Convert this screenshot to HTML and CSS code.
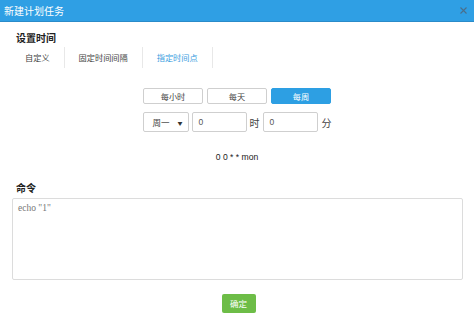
FILE: index.html
```html
<!DOCTYPE html>
<html>
<head>
<meta charset="utf-8">
<link rel="stylesheet" href="styles.css">
</head>
<body>
<div class="dialog">
  <div class="header">
    <span class="title">新建计划任务</span>
    <svg class="close" width="7" height="7" viewBox="0 0 7 7"><path d="M0.5 0.5 L6.5 6.5 M6.5 0.5 L0.5 6.5" stroke="#4a6f8c" stroke-width="1.1"/></svg>
  </div>
  <div class="section-title">设置时间</div>
  <div class="tabs">
    <div class="tab">自定义</div>
    <div class="tab">固定时间间隔</div>
    <div class="tab active">指定时间点</div>
  </div>
  <div class="panel">
    <div class="btn-row">
      <div class="opt">每小时</div>
      <div class="opt">每天</div>
      <div class="opt selected">每周</div>
    </div>
    <div class="input-row">
      <div class="select"><span>周一</span><span class="arrow">▼</span></div>
      <div class="input first">0</div>
      <span class="unit">时</span>
      <div class="input">0</div>
      <span class="unit last">分</span>
    </div>
    <div class="cron">0 0 * * mon</div>
  </div>
  <div class="section-title cmd-title">命令</div>
  <div class="textarea">echo "1"</div>
  <div class="footer"><div class="ok">确定</div></div>
</div>
</body>
</html>
```
FILE: styles.css
```css
* { box-sizing: border-box; }
html, body { margin: 0; padding: 0; background: #fff; }
body {
  width: 474px;
  height: 322px;
  overflow: hidden;
  font-family: "Noto Sans CJK SC", "Liberation Sans", sans-serif;
  color: #333;
}
.dialog { display: flex; flex-direction: column; }
.header {
  height: 22px;
  background: #2f9fe4;
  border-bottom: 1px solid #2a8bc9;
  display: flex;
  align-items: center;
  justify-content: space-between;
  padding: 0 7px 0 4px;
}
.title { color: #fff; font-size: 10px; line-height: 12px; }
.close { display: block; }
.section-title {
  font-size: 10px;
  line-height: 12px;
  font-weight: bold;
  color: #222;
  padding-left: 16px;
  margin-top: 10px;
}
.tabs {
  display: flex;
  margin: 3px 0 0 11px;
}
.tab {
  height: 21px;
  line-height: 21px;
  font-size: 8.2px;
  padding: 0 14px;
  border-right: 1px solid #e8e8e8;
  color: #444;
}
.tab.active { color: #3b9de0; }
.panel {
  display: flex;
  flex-direction: column;
  align-items: center;
  margin-top: 20px;
}
.btn-row { display: flex; gap: 4px; }
.opt {
  width: 60px;
  height: 16px;
  border: 1px solid #cfcfcf;
  border-radius: 2px;
  font-size: 8.2px;
  line-height: 14px;
  text-align: center;
  color: #444;
}
.opt.selected { background: #2d9fe3; border-color: #2d9fe3; color: #fff; }
.input-row {
  display: flex;
  align-items: center;
  margin-top: 8px;
  height: 20px;
}
.select {
  width: 46px;
  height: 20px;
  border: 1px solid #cfcfcf;
  border-radius: 2px;
  display: flex;
  align-items: center;
  justify-content: space-between;
  padding: 0 5px 0 9px;
  font-size: 8.5px;
  color: #444;
}
.arrow { font-size: 5px; color: #333; }
.input {
  width: 55px;
  height: 20px;
  border: 1px solid #cfcfcf;
  border-radius: 2px;
  padding-left: 6px;
  font-family: "Liberation Sans", sans-serif;
  font-size: 8.5px;
  line-height: 18px;
  color: #555;
}
.input.first { margin-left: 3px; }
.unit {
  font-size: 10px;
  color: #444;
  width: 16px;
  padding-left: 3px;
}
.unit.last { width: 14px; padding-left: 4px; }
.cron {
  margin-top: 19px;
  font-family: "Liberation Sans", sans-serif;
  font-size: 8.6px;
  line-height: 12px;
  color: #222;
}
.cmd-title { margin-top: 19px; }
.textarea {
  margin: 4px 0 0 12px;
  width: 451px;
  height: 82px;
  border: 1px solid #dcdcdc;
  border-radius: 2px;
  padding: 4px 5px;
  font-family: "Liberation Serif", serif;
  font-size: 9.5px;
  color: #777;
}
.footer {
  display: flex;
  justify-content: center;
  margin-top: 14px;
  padding-left: 3px;
}
.ok {
  width: 34px;
  height: 19px;
  background: #6dbd47;
  border-radius: 2px;
  color: #fff;
  font-size: 8.5px;
  line-height: 19px;
  text-align: center;
}
```
